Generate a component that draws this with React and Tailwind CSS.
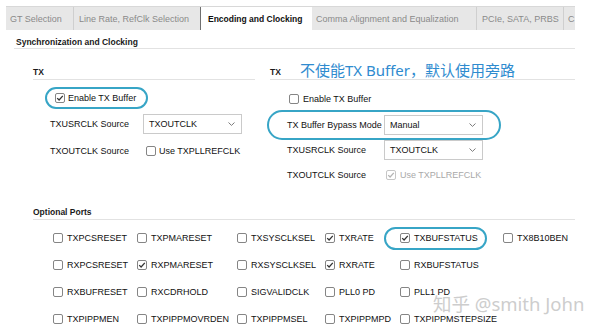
import React from "react";

const tabs = [
  { label: "GT Selection", cls: "w-[67px] pl-[4px]" },
  { label: "Line Rate, RefClk Selection", cls: "w-[127px] pl-[5px] border-l border-[#cfcfcf]" },
  { label: "Encoding and Clocking", cls: "w-[112px] pl-[7px] bg-white border-l border-[#6f6f6f] font-bold text-[#111] text-[8.5px]" },
  { label: "Comma Alignment and Equalization", cls: "w-[164px] pl-[4px]" },
  { label: "PCIe, SATA, PRBS", cls: "w-[87px] pl-[5px] border-l border-[#cfcfcf]" },
  { label: "C", cls: "w-[12px] pl-[4px] border-l border-[#cfcfcf]" },
];

const ports = [
  [["TXPCSRESET"], ["TXPMARESET"], ["TXSYSCLKSEL"], ["TXRATE", true], ["TXBUFSTATUS", true], ["TX8B10BEN"]],
  [["RXPCSRESET"], ["RXPMARESET", true], ["RXSYSCLKSEL"], ["RXRATE", true], ["RXBUFSTATUS"]],
  [["RXBUFRESET"], ["RXCDRHOLD"], ["SIGVALIDCLK"], ["PLL0 PD"], ["PLL1 PD"]],
  [["TXPIPPMEN"], ["TXPIPPMOVRDEN"], ["TXPIPPMSEL"], ["TXPIPPMPD"], ["TXPIPPMSTEPSIZE"]],
];

const Check = ({ checked, disabled }) => (
  <span
    className={`w-[10px] h-[10px] shrink-0 rounded-[2px] border bg-white flex items-center justify-center ${
      disabled ? "border-[#c6c6c6]" : "border-[#858585]"
    }`}
  >
    {checked && (
      <svg width="8" height="8" viewBox="0 0 8 8">
        <path d="M1.2 4.1 L3.1 6 L6.8 1.9" fill="none" stroke={disabled ? "#b4b4b4" : "#333"} strokeWidth="1.3" />
      </svg>
    )}
  </span>
);

const Select = ({ value }) => (
  <div className="w-[99px] h-[20px] border border-[#cacaca] bg-white flex items-center justify-between pl-[5px] pr-[6px]">
    <span>{value}</span>
    <svg width="7" height="4" viewBox="0 0 7 4">
      <path d="M0.5 0.5 L3.5 3.4 L6.5 0.5" fill="none" stroke="#7a7a7a" strokeWidth="1" />
    </svg>
  </div>
);

const App = () => {
  return (
    <div className="w-[600px] h-[329px] overflow-hidden bg-white relative text-[9px] leading-[12px] text-[#111] font-['Liberation_Sans',Arial,sans-serif]">
      {/* tab strip */}
      <div className="mt-[6px] ml-[6px] w-[569px] h-[24px] flex overflow-hidden bg-[#e7e7e7] border-t border-[#d8d8d8] text-[#8a8a8a]">
        {tabs.map((t) => (
          <div key={t.label} className={`h-full shrink-0 flex items-center whitespace-nowrap overflow-hidden ${t.cls}`}>
            {t.label}
          </div>
        ))}
      </div>

      <div className="ml-[14px] w-[561px] mt-[6px] h-[13px] pl-[2px] border-b border-[#e2e2e2] font-bold text-[8.5px] text-[#1a1a1a]">
        Synchronization and Clocking
      </div>

      <div className="flex">
        {/* left TX */}
        <div className="ml-[33px] w-[222px]">
          <div className="h-[31px] flex items-end border-b border-[#e2e2e2]">
            <span className="mb-[1px] font-bold text-[8.5px] text-[#1a1a1a]">TX</span>
          </div>
          <div className="mt-[7px] ml-[12px] w-[103px] h-[22px] rounded-full border-2 border-[#37a5c6] flex items-center gap-[3px] pl-[8px]">
            <Check checked />
            <span>Enable TX Buffer</span>
          </div>
          <div className="mt-[5px] h-[20px] flex items-center pl-[17px]">
            <span className="w-[93px] shrink-0">TXUSRCLK Source</span>
            <Select value="TXOUTCLK" />
          </div>
          <div className="mt-[7px] h-[20px] flex items-center pl-[17px]">
            <span className="w-[96px] shrink-0">TXOUTCLK Source</span>
            <Check />
            <span className="ml-[3px]">Use TXPLLREFCLK</span>
          </div>
        </div>

        {/* right TX */}
        <div className="ml-[15px] w-[305px]">
          <div className="h-[31px] flex items-end border-b border-[#e2e2e2] relative">
            <span className="mb-[1px] font-bold text-[8.5px] text-[#1a1a1a]">TX</span>
            <span className="absolute left-[30px] bottom-[-1px] text-[15px] leading-[20px] text-[#2f8bcf] font-['Noto_Sans','Noto_Sans_CJK_SC',sans-serif] whitespace-nowrap">
              不使能TX Buffer，默认使用旁路
            </span>
          </div>
          <div className="mt-[9px] h-[20px] flex items-center gap-[4px] pl-[19px]">
            <Check />
            <span>Enable TX Buffer</span>
          </div>
          <div className="mt-[1px] ml-[-3px] w-[234px] h-[30px] rounded-full border-2 border-[#37a5c6] flex items-center pl-[18px]">
            <span className="w-[97px] shrink-0">TX Buffer Bypass Mode</span>
            <Select value="Manual" />
          </div>
          <div className="h-[20px] flex items-center pl-[17px]">
            <span className="w-[97px] shrink-0">TXUSRCLK Source</span>
            <Select value="TXOUTCLK" />
          </div>
          <div className="mt-[5px] h-[20px] flex items-center pl-[17px]">
            <span className="w-[99px] shrink-0">TXOUTCLK Source</span>
            <Check checked disabled />
            <span className="ml-[4px] text-[#a9a9a9]">Use TXPLLREFCLK</span>
          </div>
        </div>
      </div>

      {/* optional ports */}
      <div className="ml-[33px] w-[542px] mt-[21px] h-[14px] pb-[1px] flex items-end border-b border-[#e2e2e2] font-bold text-[8.5px] text-[#1a1a1a]">
        Optional Ports
      </div>
      <div className="ml-[33px] mt-[8px] flex flex-col gap-[7px]">
        {ports.map((row, i) => (
          <div key={i} className="relative h-[20px] pl-[20px] grid grid-cols-[84px_100px_88px_75px_103px_70px] items-center">
            {row.map(([name, checked]) => (
              <div key={name} className="flex items-center gap-[4px] whitespace-nowrap">
                <Check checked={checked} />
                <span>{name}</span>
              </div>
            ))}
            {i === 0 && (
              <div className="absolute left-[351px] top-[-1px] w-[103px] h-[23px] rounded-full border-2 border-[#37a5c6]" />
            )}
          </div>
        ))}
      </div>

      <div className="absolute left-[433px] top-[293px] text-[18.5px] leading-[22px] text-[#cdcdcd] whitespace-nowrap font-['Noto_Sans','Noto_Sans_CJK_SC',sans-serif]">
        知乎 @smith John
      </div>
    </div>
  );
};

export default App;
